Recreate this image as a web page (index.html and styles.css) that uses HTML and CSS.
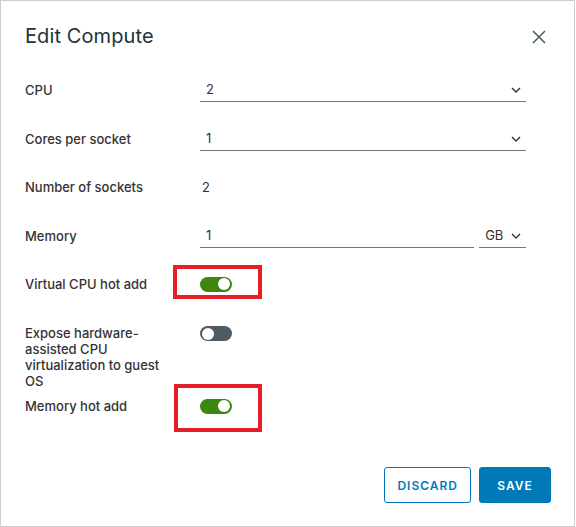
FILE: index.html
```html
<!DOCTYPE html>
<html lang="en">
<head>
<meta charset="utf-8">
<title>Edit Compute</title>
<link rel="stylesheet" href="styles.css">
</head>
<body>
<div class="dialog">
  <div class="header">
    <h1 class="title">Edit Compute</h1>
    <button class="close" aria-label="Close">
      <svg width="24" height="24" viewBox="0 0 24 24"><path d="M6 6 L18 18 M18 6 L6 18" stroke="#4a5960" stroke-width="1.5" fill="none"/></svg>
    </button>
  </div>
  <div class="form">
    <div class="row row-first">
      <div class="label">CPU</div>
      <div class="control">
        <div class="select wide"><span>2</span>
          <svg class="chev" width="10" height="6" viewBox="0 0 10 6"><path d="M1 1 L5 5 L9 1" stroke="#313131" stroke-width="1.4" fill="none"/></svg>
        </div>
      </div>
    </div>
    <div class="row">
      <div class="label">Cores per socket</div>
      <div class="control">
        <div class="select wide"><span>1</span>
          <svg class="chev" width="10" height="6" viewBox="0 0 10 6"><path d="M1 1 L5 5 L9 1" stroke="#313131" stroke-width="1.4" fill="none"/></svg>
        </div>
      </div>
    </div>
    <div class="row row-static">
      <div class="label">Number of sockets</div>
      <div class="control"><span class="value">2</span></div>
    </div>
    <div class="row">
      <div class="label">Memory</div>
      <div class="control split">
        <div class="select grow"><span>1</span></div>
        <div class="select unit"><span>GB</span>
          <svg class="chev" width="10" height="6" viewBox="0 0 10 6"><path d="M1 1 L5 5 L9 1" stroke="#313131" stroke-width="1.4" fill="none"/></svg>
        </div>
      </div>
    </div>
    <div class="row row-toggle gap-md">
      <div class="label">Virtual CPU hot add</div>
      <div class="control toggle-cell">
        <span class="toggle on"></span>
        <span class="mark mark-a"></span>
      </div>
    </div>
    <div class="row row-toggle row-top gap-lg">
      <div class="label multi">Expose hardware-assisted CPU virtualization to guest OS</div>
      <div class="control toggle-cell">
        <span class="toggle off"></span>
      </div>
    </div>
    <div class="row row-toggle gap-sm">
      <div class="label">Memory hot add</div>
      <div class="control toggle-cell">
        <span class="toggle on"></span>
        <span class="mark mark-b"></span>
      </div>
    </div>
  </div>
  <div class="footer">
    <button class="btn btn-outline">Discard</button>
    <button class="btn btn-primary">Save</button>
  </div>
</div>
</body>
</html>
```
FILE: styles.css
```css
* { box-sizing: border-box; }
html, body { margin: 0; padding: 0; background: #fff; }
body {
  font-family: Inter, "Open Sans", sans-serif;
  color: #333;
  width: 576px;
  height: 527px;
}
.dialog {
  width: 575px;
  height: 527px;
  border: 1px solid #c9d0d4;
  padding: 23px 23px 23px 24px;
  display: flex;
  flex-direction: column;
  background: #fff;
}
.header {
  display: flex;
  justify-content: space-between;
  align-items: center;
  height: 24px;
}
.title {
  margin: 0;
  font-size: 20px;
  font-weight: 400;
  line-height: 24px;
  color: #21333b;
  letter-spacing: 0.1px;
}
.close {
  border: 0;
  background: none;
  padding: 0;
  width: 24px;
  height: 24px;
  margin-top: 2px;
  display: block;
}
.close svg { display: block; }
.form { margin-top: 29px; }
.row {
  display: grid;
  grid-template-columns: 175px 326px;
  align-items: center;
  height: 25px;
  margin-top: 24px;
}
.row-first { margin-top: 0; }
.row-static { height: 24px; }
.row-toggle { height: 16px; }
.row-top { align-items: start; height: auto; }
.gap-md { margin-top: 28px; }
.gap-lg { margin-top: 33px; }
.gap-sm { margin-top: 9px; }
.label {
  font-size: 13px;
  font-weight: 500;
  line-height: 16px;
  color: #333;
}
.label.multi { width: 150px; }
.control { display: flex; align-items: center; height: 100%; }
.value { font-size: 13px; padding-left: 2px; color: #333; }
.select {
  height: 25px;
  border-bottom: 1px solid #6b7a81;
  display: flex;
  align-items: center;
  justify-content: space-between;
  padding: 0 5px 0 6px;
  font-size: 13px;
  color: #333;
}
.select.wide { width: 326px; }
.split { gap: 5px; }
.select.grow { width: 275px; }
.select.unit { width: 47px; padding-left: 6px; }
.chev { display: block; margin-top: 1px; }
.toggle-cell { position: relative; height: 16px; }
.row-top .toggle-cell { padding-top: 1px; height: auto; }
.toggle {
  position: relative;
  display: block;
  width: 32px;
  height: 15px;
  border-radius: 8px;
}
.toggle.on { background: #3d860f; }
.toggle.off { background: #4e5b62; }
.toggle::after {
  content: "";
  position: absolute;
  top: 1.5px;
  width: 12px;
  height: 12px;
  border-radius: 50%;
  background: #fff;
}
.toggle.on::after { right: 2px; }
.toggle.off::after { left: 2px; }
.mark {
  position: absolute;
  border: 4px solid #e61e27;
}
.mark-a { left: -27px; top: -11px; width: 89px; height: 34px; }
.mark-b { left: -26px; top: -14px; width: 88px; height: 48px; }
.footer {
  margin-top: auto;
  display: flex;
  justify-content: flex-end;
  gap: 8px;
}
.btn {
  height: 36px;
  min-width: 72px;
  padding: 0 12px;
  border-radius: 3px;
  font-family: Inter, "Open Sans", sans-serif;
  font-size: 12px;
  font-weight: 600;
  letter-spacing: 1px;
  text-transform: uppercase;
  cursor: pointer;
}
.btn-outline {
  background: #fff;
  color: #0079b8;
  border: 1px solid #0079b8;
}
.btn-primary {
  background: #0079b8;
  color: #fff;
  border: 1px solid #0079b8;
}
```
